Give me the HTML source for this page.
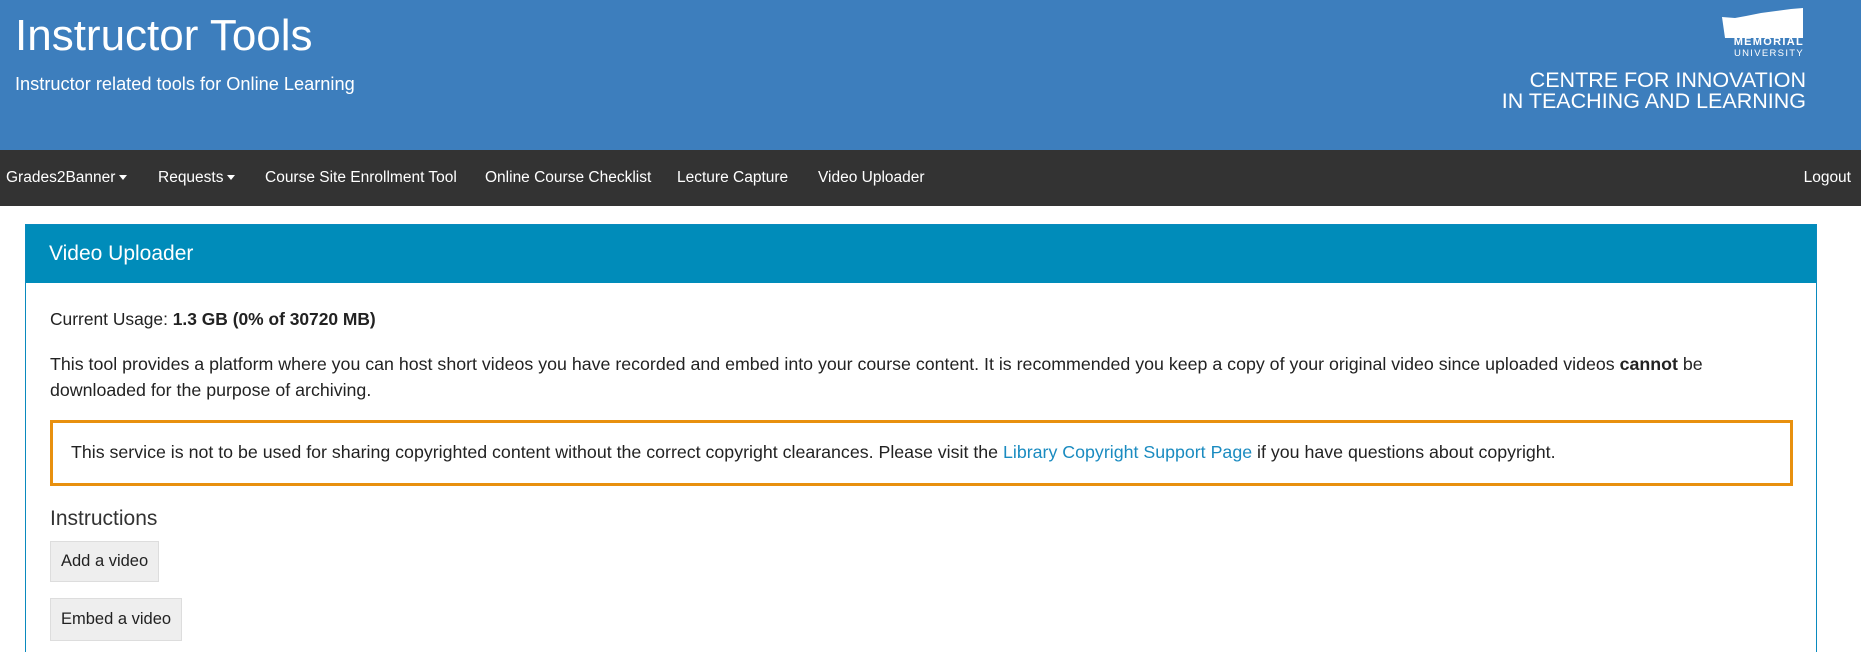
<!DOCTYPE html>
<html><head><meta charset="utf-8"><style>
*{box-sizing:border-box;margin:0;padding:0}
html,body{width:1861px;height:652px;overflow:hidden}
body{background:#fff;font-family:"Liberation Sans",sans-serif;color:#222;position:relative}
.hdr{position:absolute;left:0;top:0;width:1861px;height:150px;background:#3d7ebd;color:#fff}
.t1{position:absolute;left:15px;top:11px;font-size:44px;font-weight:normal}
.t2{position:absolute;left:15px;top:74px;font-size:18.2px}
.ct{position:absolute;right:55px;top:70px;font-size:21.5px;line-height:21px;text-align:right;color:#fff}
.mu{position:absolute;left:1720px;top:37px;width:84px;font-size:11px;font-weight:bold;text-align:right;line-height:11px;letter-spacing:1.3px}
.nav{position:absolute;left:0;top:150px;width:1861px;height:56px;background:#333;color:#fff;font-size:15.5px}
.nav span{position:absolute;top:19px}
.car{display:inline-block;width:0;height:0;border-left:4px solid transparent;border-right:4px solid transparent;border-top:5px solid #fff;vertical-align:middle;margin-left:4px}
.panel{position:absolute;left:25px;top:224px;width:1792px;height:450px;border:1px solid #0a8abe}
.ph{height:58px;background:#008cba;color:#fff;font-size:21px;padding:17px 0 0 23px}
.c{position:absolute;left:24px;font-size:17.4px}
.box{position:absolute;left:24px;top:195px;width:1743px;height:66px;border:3px solid #e8900f;padding:19px 0 0 18px;font-size:17.8px}
a{color:#1a8bc0;text-decoration:none}
.btn{position:absolute;left:24px;background:#eee;border:1px solid #ddd;font-size:16.5px;padding:10px 10px}
</style></head><body>
<div class="hdr">
<div class="t1">Instructor Tools</div>
<div class="t2">Instructor related tools for Online Learning</div>
<svg style="position:absolute;left:1721px;top:7px" width="84" height="33"><path d="M1 10 L14 11 L25 9 L40 6 L55 4 L70 2 L82 1 L82 31 L4 31 Z" fill="#fff"/></svg>
<div class="mu">MEMORIAL<br><span style="font-weight:normal;font-size:9.5px">UNIVERSITY</span></div>
<div class="ct">CENTRE FOR INNOVATION<br>IN TEACHING AND LEARNING</div>
</div>
<div class="nav">
<span style="left:6px">Grades2Banner<i class="car"></i></span>
<span style="left:158px">Requests<i class="car"></i></span>
<span style="left:265px">Course Site Enrollment Tool</span>
<span style="left:485px">Online Course Checklist</span>
<span style="left:677px">Lecture Capture</span>
<span style="left:818px">Video Uploader</span>
<span style="right:10px">Logout</span>
</div>
<div class="panel">
<div class="ph">Video Uploader</div>
<div class="c" style="top:84px">Current Usage: <b>1.3 GB (0% of 30720 MB)</b></div>
<div class="c" style="top:126px;width:1690px;line-height:26px;font-size:17.8px">This tool provides a platform where you can host short videos you have recorded and embed into your course content. It is recommended you keep a copy of your original video since uploaded videos <b>cannot</b> be downloaded for the purpose of archiving.</div>
<div class="box">This service is not to be used for sharing copyrighted content without the correct copyright clearances. Please visit the <a>Library Copyright Support Page</a> if you have questions about copyright.</div>
<div class="c" style="top:282px;font-size:21px;color:#333">Instructions</div>
<div class="btn" style="top:316px">Add a video</div>
<div class="btn" style="top:373px;padding:11px 10px">Embed a video</div>
</div>
</body></html>
